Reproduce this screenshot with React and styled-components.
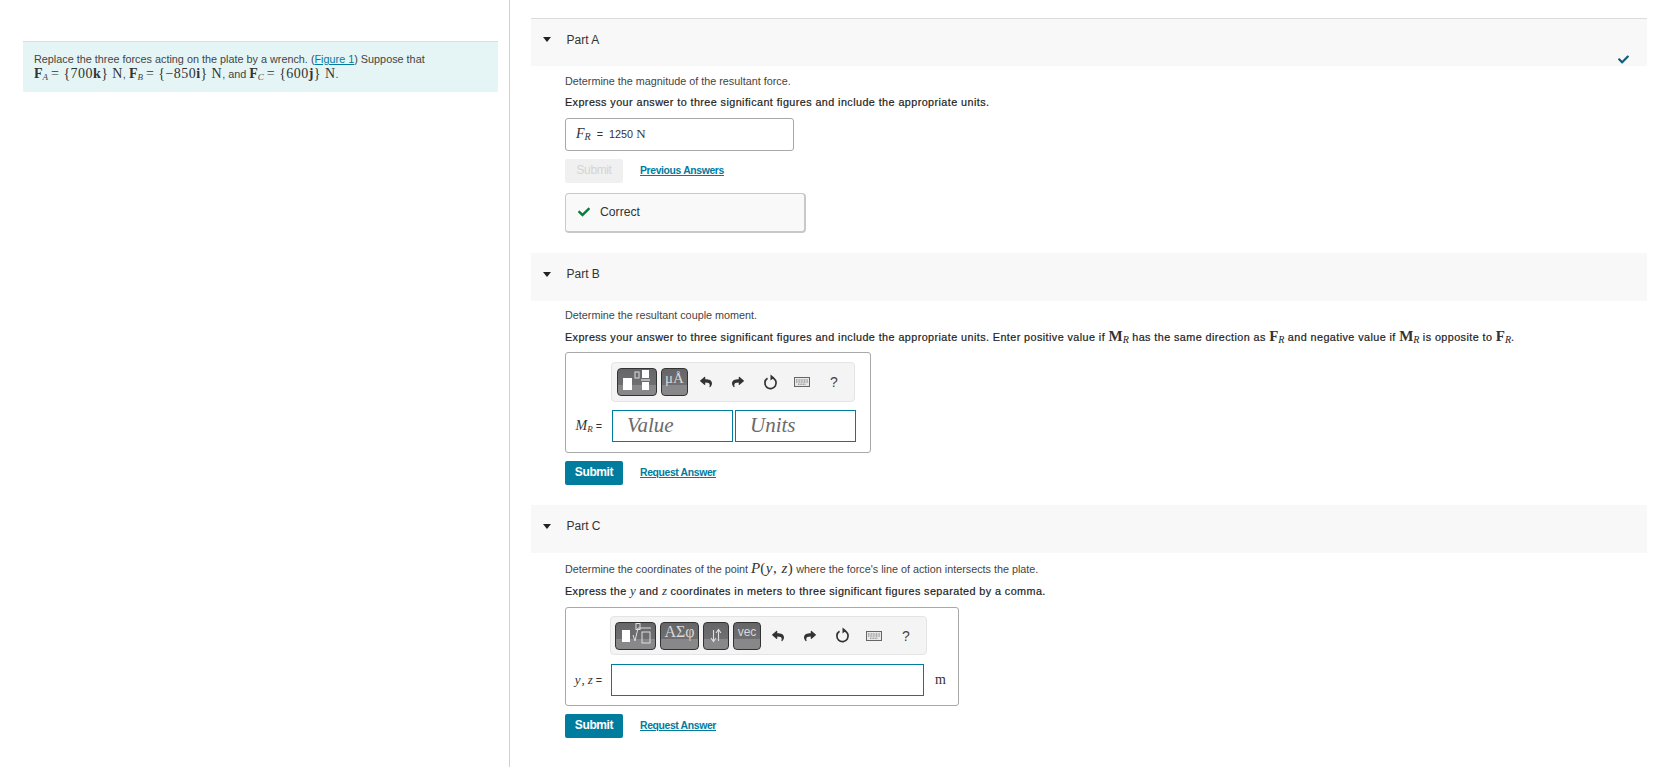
import React from "react"
import styled, { createGlobalStyle } from "styled-components"
import { FaCheck, FaReply, FaShare } from "react-icons/fa"

const GlobalStyle = createGlobalStyle`
  html, body {
    margin: 0;
    padding: 0;
    background: #fff;
    overflow: hidden;
  }
  body {
    font-family: "Liberation Sans", Arial, sans-serif;
    font-size: 11px;
    color: #333;
  }
`

const Page = styled.div`
  display: flex;
  width: 1662px;
  height: 767px;
`

const LeftPane = styled.aside`
  box-sizing: border-box;
  width: 510px;
  height: 767px;
  flex: none;
  padding: 41px 11px 0 23px;
  border-right: 1px solid #c4d4e4;
`

const Intro = styled.div`
  box-sizing: border-box;
  height: 51px;
  padding: 10px 11px 0;
  background: #e5f5f6;
  border-top: 1px solid #d6e0e2;
  font-size: 10.83px;
  line-height: 15px;
  color: #444;
  white-space: nowrap;
`

const FigureLink = styled.a`
  color: #007c9e;
  text-decoration: underline;
`

const RightPane = styled.main`
  box-sizing: border-box;
  flex: 1;
  padding: 18px 15px 0 21px;
`

const PartHeader = styled.div`
  box-sizing: border-box;
  position: relative;
  display: flex;
  align-items: center;
  height: 48px;
  padding: 0 0 6px 12px;
  background: #f8f8f8;
  border-top: ${(p) => (p.$ruled ? "1px solid #dcdcdc" : "0")};
  font-size: 12px;
  color: #333;
`

const Caret = styled.span`
  width: 0;
  height: 0;
  margin-right: 15.5px;
  border-left: 4.5px solid transparent;
  border-right: 4.5px solid transparent;
  border-top: 5px solid #222;
`

const DoneMark = styled.span`
  position: absolute;
  right: 18px;
  bottom: 1px;
  display: flex;
  color: #0d5f7a;
  font-size: 11px;
`

const PartBody = styled.section`
  padding: ${(p) => p.$top || 6}px 0 ${(p) => p.$bottom || 21}px 34px;
`

const Prompt = styled.p`
  margin: 0;
  font-size: 10.8px;
  line-height: 16px;
  color: #444;
  white-space: nowrap;
`

const Instruction = styled.p`
  margin: ${(p) => p.$gap || 6}px 0 0;
  font-size: 10.8px;
  letter-spacing: 0.42px;
  line-height: 16px;
  color: #222;
  -webkit-text-stroke: 0.2px #222;
  white-space: nowrap;
`

const Math = styled.span`
  font-family: "Liberation Serif", "Times New Roman", serif;
  font-size: ${(p) => p.$size || 13}px;
  font-weight: ${(p) => (p.$bold ? 700 : 400)};
  font-style: ${(p) => (p.$italic ? "italic" : "normal")};
  letter-spacing: ${(p) => p.$track || 0}px;
  line-height: 0;
  -webkit-text-stroke: 0;
  color: #333;
`

const Sub = styled.sub`
  font-family: "Liberation Serif", "Times New Roman", serif;
  font-style: italic;
  font-weight: 400;
  font-size: ${(p) => p.$size || 9}px;
  letter-spacing: 0;
  line-height: 0;
  vertical-align: -2px;
  -webkit-text-stroke: 0;
`

const AnswerBox = styled.div`
  box-sizing: border-box;
  width: 229px;
  height: 33px;
  margin-top: 8px;
  padding-left: 10px;
  border: 1px solid #a8a8a8;
  border-radius: 3px;
  font-size: 10.8px;
  line-height: 30px;
  color: #333;
`

const Actions = styled.div`
  display: flex;
  align-items: center;
  gap: 17px;
  margin-top: 8px;
`

const SubmitButton = styled.button`
  box-sizing: border-box;
  width: 58px;
  height: 24px;
  padding: 0 0 2px;
  border: 0;
  border-radius: 2px;
  background: ${(p) => (p.disabled ? "#f0f0f0" : "#007c9e")};
  color: ${(p) => (p.disabled ? "#d4d4d4" : "#fff")};
  font-family: inherit;
  font-size: 12px;
  font-weight: ${(p) => (p.disabled ? 400 : 700)};
  letter-spacing: -0.4px;
`

const ActionLink = styled.a`
  padding-bottom: 2px;
  color: #007c9e;
  font-size: 10.4px;
  font-weight: 700;
  letter-spacing: -0.36px;
  text-decoration: underline;
`

const Feedback = styled.div`
  box-sizing: border-box;
  display: flex;
  align-items: center;
  gap: 10px;
  width: 241px;
  height: 40px;
  margin-top: 10px;
  padding: 0 0 2px 12px;
  background: #f9f9f9;
  border: 1px solid #c8c8c8;
  border-right-width: 2px;
  border-bottom-width: 2px;
  border-radius: 4px;
  font-size: 12.2px;
  color: #333;
  svg {
    color: #077d3f;
    font-size: 12px;
  }
`

const EditorBox = styled.div`
  box-sizing: border-box;
  width: ${(p) => p.$width}px;
  height: ${(p) => p.$height}px;
  margin-top: ${(p) => p.$gap}px;
  padding: ${(p) => p.$pad}px 0 0 ${(p) => p.$left}px;
  border: 1px solid #a8a8a8;
  border-radius: 3px;
`

const Toolbar = styled.div`
  box-sizing: border-box;
  display: flex;
  align-items: center;
  width: ${(p) => p.$width}px;
  height: ${(p) => p.$height}px;
  padding: 0 4px 0 ${(p) => p.$lead}px;
  background: #f4f4f4;
  border: 1px solid #e4e4e4;
  border-radius: 4px;
`

const ToolButton = styled.span`
  box-sizing: border-box;
  display: flex;
  flex: none;
  align-items: ${(p) => (p.$top ? "flex-start" : "center")};
  justify-content: center;
  width: ${(p) => p.$width}px;
  height: 28px;
  margin-right: 4px;
  border: 1px solid #333;
  border-radius: 4px;
  background: linear-gradient(#666668 0, #6f6f71 62%, #88888a 62%, #88888a 100%);
  color: #d8d8d8;
  font-family: ${(p) => (p.$sans ? '"Liberation Sans", sans-serif' : '"Liberation Serif", serif')};
  font-size: ${(p) => p.$size || 15}px;
  line-height: 18px;
  &:last-of-type {
    margin-right: 0;
  }
`

const ToolIcons = styled.div`
  display: grid;
  flex: none;
  grid-template-columns: repeat(5, 32px);
  justify-items: center;
  align-items: center;
  margin-left: auto;
  color: #333;
  font-size: 12px;
`

const Help = styled.span`
  font-size: 14px;
  color: #444;
`

const EditorRow = styled.div`
  display: flex;
  align-items: center;
  gap: 2px;
  margin-top: ${(p) => p.$gap}px;
`

const EditorLabel = styled.label`
  box-sizing: border-box;
  width: 36px;
  margin-left: -${(p) => p.$left}px;
  margin-right: ${(p) => p.$left - 37}px;
  flex: none;
  text-align: right;
  font-size: 10.8px;
  color: #333;
  white-space: nowrap;
`

const Field = styled.div`
  box-sizing: border-box;
  width: ${(p) => p.$width}px;
  height: 32px;
  padding-left: ${(p) => p.$inset || 0}px;
  border: 1px solid #007c9e;
  font-family: "Liberation Serif", serif;
  font-style: italic;
  font-size: 21px;
  line-height: 28px;
  color: #6a6a6a;
`

const UnitMark = styled.span`
  margin-left: 9px;
  font-family: "Liberation Serif", serif;
  font-size: 14px;
  color: #333;
`

const TemplateIcon = () => (
  <svg width="36" height="26" viewBox="0 0 36 26">
    <rect x="4" y="9" width="9" height="12" fill="#fff" />
    <rect x="16" y="3" width="4" height="6" fill="none" stroke="#ddd" />
    <rect x="23" y="1" width="7" height="8" fill="#fff" />
    <rect x="22" y="10.5" width="9" height="1" fill="#fff" />
    <rect x="23" y="13" width="7" height="8" fill="#fff" />
  </svg>
)

const RootIcon = () => (
  <svg width="36" height="26" viewBox="0 0 36 26">
    <rect x="4" y="7" width="8" height="12" fill="#fff" />
    <rect x="18" y="0.5" width="4" height="6" fill="none" stroke="#ddd" />
    <path d="M15 12 l2 6 l3 -13 h13" fill="none" stroke="#ddd" />
    <rect x="24" y="9" width="8" height="11" fill="none" stroke="#ddd" />
  </svg>
)

const ArrowsIcon = () => (
  <svg width="14" height="18" viewBox="0 0 14 18">
    <path d="M4.5 3 v11 M2 11 l2.5 3.5 l2.5 -3.5 M9.5 14 v-11 M7 6 l2.5 -3.5 l2.5 3.5" fill="none" stroke="#ddd" strokeWidth="1.1" />
  </svg>
)

const ResetIcon = () => (
  <svg width="15" height="17" viewBox="0 0 14 16">
    <path d="M8.5 3.4 A5.3 5.3 0 1 1 4.2 4" fill="none" stroke="#333" strokeWidth="1.6" />
    <path d="M7 0.4 L7 6 L10.5 3.2 Z" fill="#333" />
  </svg>
)

const KeyboardIcon = () => (
  <svg width="16" height="10" viewBox="0 0 16 10">
    <rect x="0.5" y="0.5" width="15" height="9" fill="#e8e8e8" stroke="#666" />
    <path d="M2 3 h12 M2 5 h12 M4 7.2 h8" stroke="#777" strokeWidth="1" strokeDasharray="1 0.6" />
  </svg>
)

const ToolGroup = () => (
  <ToolIcons>
    <FaReply />
    <FaShare />
    <ResetIcon />
    <KeyboardIcon />
    <Help>?</Help>
  </ToolIcons>
)

const Submit = ({ link, disabled }) => (
  <Actions>
    <SubmitButton disabled={disabled}>Submit</SubmitButton>
    <ActionLink href="#">{link}</ActionLink>
  </Actions>
)

const App = () => {
  return (
    <Page>
      <GlobalStyle />
      <LeftPane>
        <Intro>
          Replace the three forces acting on the plate by a wrench. (<FigureLink href="#">Figure 1</FigureLink>) Suppose that
          <br />
          <Math $bold $size={14}>F</Math><Sub>A</Sub> <Math $size={14} $track={0.45}>= {"{"}700<b>k</b>{"}"} N</Math>,{" "}
          <Math $bold $size={14}>F</Math><Sub>B</Sub> <Math $size={14} $track={0.45}>= {"{"}−850<b>i</b>{"}"} N</Math>, and{" "}
          <Math $bold $size={14}>F</Math><Sub>C</Sub> <Math $size={14} $track={0.45}>= {"{"}600<b>j</b>{"}"} N</Math>.
        </Intro>
      </LeftPane>

      <RightPane>
        <PartHeader $ruled>
          <Caret />
          Part A
          <DoneMark><FaCheck /></DoneMark>
        </PartHeader>
        <PartBody $top={7} $bottom={20}>
          <Prompt>Determine the magnitude of the resultant force.</Prompt>
          <Instruction $gap={5}>Express your answer to three significant figures and include the appropriate units.</Instruction>
          <AnswerBox>
            <Math $italic $size={14}>F</Math><Sub $size={10}>R</Sub>&nbsp;&nbsp;=&nbsp;&nbsp;1250<Math>&nbsp;N</Math>
          </AnswerBox>
          <Submit disabled link="Previous Answers" />
          <Feedback><FaCheck />Correct</Feedback>
        </PartBody>

        <PartHeader>
          <Caret />
          Part B
        </PartHeader>
        <PartBody $bottom={20}>
          <Prompt>Determine the resultant couple moment.</Prompt>
          <Instruction>
            Express your answer to three significant figures and include the appropriate units. Enter positive value if{" "}
            <Math $bold $size={15}>M</Math><Sub $size={10}>R</Sub> has the same direction as <Math $bold $size={15}>F</Math><Sub $size={10}>R</Sub> and negative
            value if <Math $bold $size={15}>M</Math><Sub $size={10}>R</Sub> is opposite to <Math $bold $size={15}>F</Math><Sub $size={10}>R</Sub>.
          </Instruction>
          <EditorBox $width={306} $height={101} $gap={7} $pad={9} $left={45}>
            <Toolbar $width={244} $height={40} $lead={5}>
              <ToolButton $width={40}><TemplateIcon /></ToolButton>
              <ToolButton $width={27} $top>μÅ</ToolButton>
              <ToolGroup />
            </Toolbar>
            <EditorRow $gap={8}>
              <EditorLabel $left={45}><Math $italic $size={14}>M</Math><Sub>R</Sub> =</EditorLabel>
              <Field $width={121} $inset={14}>Value</Field>
              <Field $width={121} $inset={14}>Units</Field>
            </EditorRow>
          </EditorBox>
          <Submit link="Request Answer" />
        </PartBody>

        <PartHeader>
          <Caret />
          Part C
        </PartHeader>
        <PartBody $top={8}>
          <Prompt>
            Determine the coordinates of the point <Math $italic $size={15}>P</Math><Math $size={15} $track={0.5}>(<i>y</i>, <i>z</i>)</Math> where the force's line of action intersects the plate.
          </Prompt>
          <Instruction>
            Express the <Math $italic>y</Math> and <Math $italic>z</Math> coordinates in meters to three significant figures separated by a comma.
          </Instruction>
          <EditorBox $width={394} $height={99} $gap={8} $pad={8} $left={44}>
            <Toolbar $width={317} $height={39} $lead={4}>
              <ToolButton $width={41}><RootIcon /></ToolButton>
              <ToolButton $width={39} $top $size={16}>ΑΣφ</ToolButton>
              <ToolButton $width={26}><ArrowsIcon /></ToolButton>
              <ToolButton $width={28} $sans $top $size={12}>vec</ToolButton>
              <ToolGroup />
            </Toolbar>
            <EditorRow $gap={9}>
              <EditorLabel $left={44}><Math $italic $track={0.8}>y</Math><Math>,</Math> <Math $italic>z</Math> =</EditorLabel>
              <Field $width={313} />
              <UnitMark>m</UnitMark>
            </EditorRow>
          </EditorBox>
          <Submit link="Request Answer" />
        </PartBody>
      </RightPane>
    </Page>
  )
}

export default App
